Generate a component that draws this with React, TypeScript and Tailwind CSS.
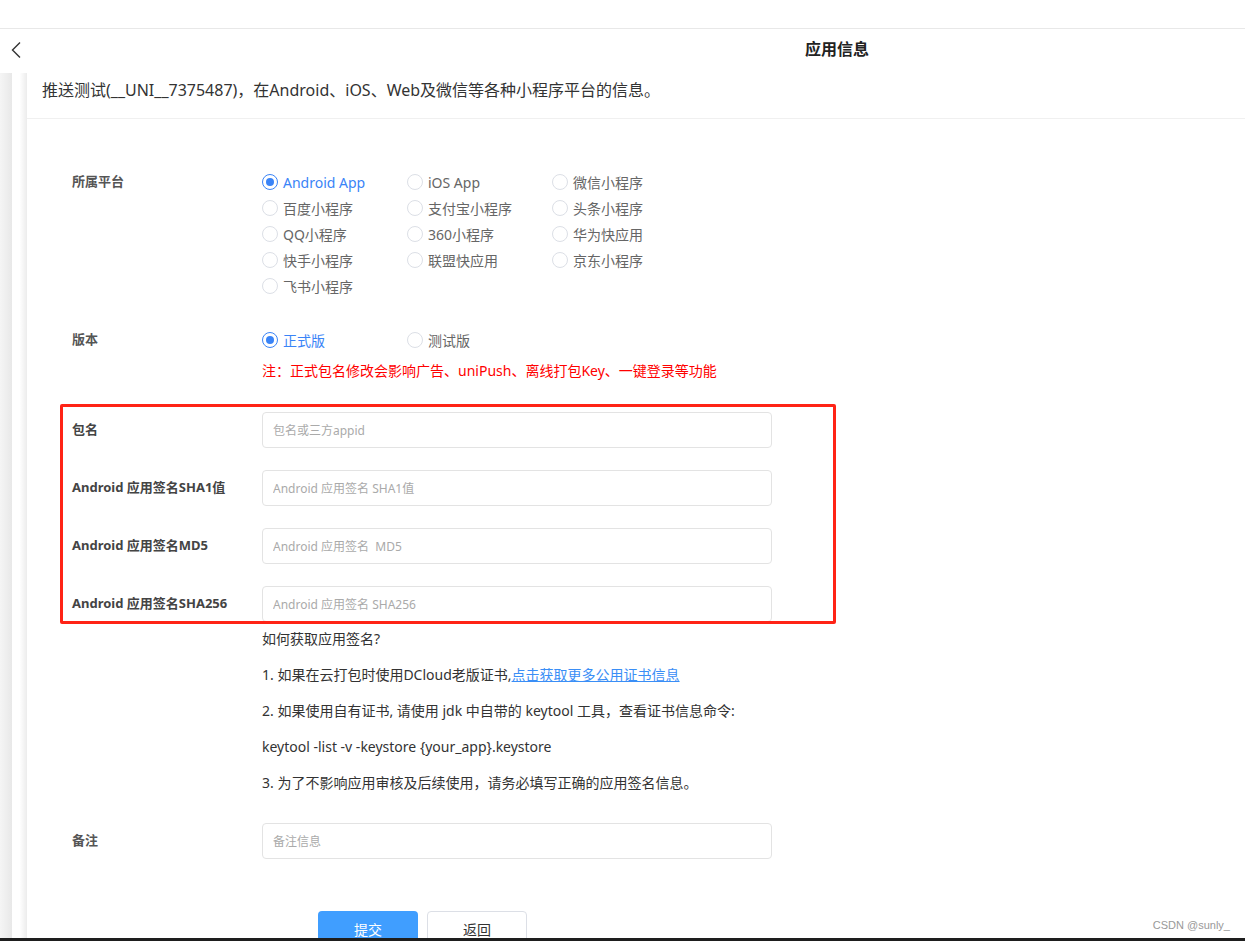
import React from 'react';

const platforms = [
  ['Android App', 'iOS App', '微信小程序'],
  ['百度小程序', '支付宝小程序', '头条小程序'],
  ['QQ小程序', '360小程序', '华为快应用'],
  ['快手小程序', '联盟快应用', '京东小程序'],
  ['飞书小程序'],
];

const signFields = [
  { label: '包名', placeholder: '包名或三方appid' },
  { label: 'Android 应用签名SHA1值', placeholder: 'Android 应用签名 SHA1值' },
  { label: 'Android 应用签名MD5', placeholder: 'Android 应用签名  MD5' },
  { label: 'Android 应用签名SHA256', placeholder: 'Android 应用签名 SHA256' },
];

function Radio({ label, checked }: { label: string; checked?: boolean }) {
  return (
    <label className="flex items-center h-[26px] cursor-pointer">
      <span
        className={`w-[16px] h-[16px] rounded-full border flex items-center justify-center shrink-0 ${
          checked ? 'border-[#3a84f7]' : 'border-[#dcdfe6]'
        }`}
      >
        {checked && <span className="w-[8px] h-[8px] rounded-full bg-[#3a84f7]" />}
      </span>
      <span className={`ml-[5px] text-[14px] ${checked ? 'text-[#3a84f7]' : 'text-[#666]'}`}>
        {label}
      </span>
    </label>
  );
}

export default function App() {
  return (
    <div className="relative w-[1245px] h-[941px] overflow-hidden bg-white font-['Noto_Sans','Noto_Sans_CJK_SC',sans-serif] text-[#333]">
      {/* top blank strip */}
      <div className="h-[29px] border-b border-[#e8e8e8]" />

      {/* nav header */}
      <div className="relative h-[44px] flex items-center">
        <svg className="absolute left-[9px] top-[12px]" width="14" height="18" viewBox="0 0 14 18" fill="none">
          <path d="M11 1.5 L3.5 9 L11 16.5" stroke="#333" strokeWidth="1.4" />
        </svg>
        <h1 className="ml-[805px] -mt-[4px] text-[16px] font-bold text-[#222]">应用信息</h1>
      </div>

      <div className="flex h-full">
        <div className="w-[12px] bg-gradient-to-r from-[#f5f5f5] to-[#e8e8e8]" />
        <div className="w-[15px] bg-gradient-to-r from-white via-white to-[#ececec]" />

        <div className="flex-1">
          {/* intro */}
          <div className="h-[46px] border-b border-[#f0f0f0] pl-[15px] pt-[5px]">
            <p className="text-[16px] leading-[24px] text-[#333]">
              推送测试(__UNI__7375487)，在Android、iOS、Web及微信等各种小程序平台的信息。
            </p>
          </div>

          <div className="relative pl-[45px] pt-[50px]">
            {/* platform */}
            <div className="flex">
              <div className="w-[190px] h-[26px] flex items-center text-[13px] font-bold text-[#555]">
                所属平台
              </div>
              <div className="flex flex-col">
                {platforms.map((row, i) => (
                  <div key={i} className="grid grid-cols-[145px_145px_145px]">
                    {row.map((p) => (
                      <Radio key={p} label={p} checked={p === 'Android App'} />
                    ))}
                  </div>
                ))}
              </div>
            </div>

            {/* version */}
            <div className="flex mt-[28px]">
              <div className="w-[190px] h-[26px] flex items-center text-[13px] font-bold text-[#555]">
                版本
              </div>
              <div className="grid grid-cols-[145px_145px]">
                <Radio label="正式版" checked />
                <Radio label="测试版" />
              </div>
            </div>
            <div className="ml-[190px] mt-[8px] h-[20px] leading-[20px] text-[14px] text-[#ff0000]">
              注：正式包名修改会影响广告、uniPush、离线打包Key、一键登录等功能
            </div>

            {/* signature fields */}
            <div className="mt-[31px] flex flex-col gap-[22px]">
              {signFields.map((f) => (
                <div key={f.label} className="flex items-center">
                  <div className="w-[190px] text-[13px] font-bold text-[#444]">{f.label}</div>
                  <input
                    className="w-[510px] h-[36px] rounded-[4px] border border-[#e3e3e3] px-[10px] text-[12px] outline-none placeholder:text-[#aaa]"
                    placeholder={f.placeholder}
                  />
                </div>
              ))}
            </div>

            {/* annotation box */}
            <div className="absolute left-[33px] top-[285px] w-[776px] h-[220px] border-[3px] border-[#ff2316] rounded-[2px] pointer-events-none" />

            {/* help */}
            <div className="ml-[190px] mt-[7px] flex flex-col gap-[16px] text-[14px] leading-[20px] text-[#333]">
              <p>如何获取应用签名?</p>
              <p>
                1. 如果在云打包时使用DCloud老版证书,
                <a href="#" className="text-[#3a8ef6] underline">
                  点击获取更多公用证书信息
                </a>
              </p>
              <p>2. 如果使用自有证书, 请使用 jdk 中自带的 keytool 工具，查看证书信息命令:</p>
              <p>keytool -list -v -keystore {'{your_app}'}.keystore</p>
              <p>3. 为了不影响应用审核及后续使用，请务必填写正确的应用签名信息。</p>
            </div>

            {/* remark */}
            <div className="flex items-center mt-[30px]">
              <div className="w-[190px] text-[13px] font-bold text-[#555]">备注</div>
              <input
                className="w-[510px] h-[36px] rounded-[4px] border border-[#e3e3e3] px-[10px] text-[12px] outline-none placeholder:text-[#aaa]"
                placeholder="备注信息"
              />
            </div>

            {/* actions */}
            <div className="ml-[246px] mt-[52px] flex gap-[9px]">
              <button className="w-[100px] h-[36px] rounded-[4px] bg-[#409eff] text-white text-[14px]">
                提交
              </button>
              <button className="w-[100px] h-[36px] rounded-[4px] border border-[#dcdfe6] bg-white text-[#333] text-[14px]">
                返回
              </button>
            </div>
          </div>
        </div>
      </div>

      <div className="absolute right-[15px] bottom-[8px] text-[11px] text-[#999] font-['Liberation_Sans',sans-serif]">
        CSDN @sunly_
      </div>
      <div className="absolute left-0 right-0 bottom-0 h-[3px] bg-[#1e1e1e]" />
    </div>
  );
}
